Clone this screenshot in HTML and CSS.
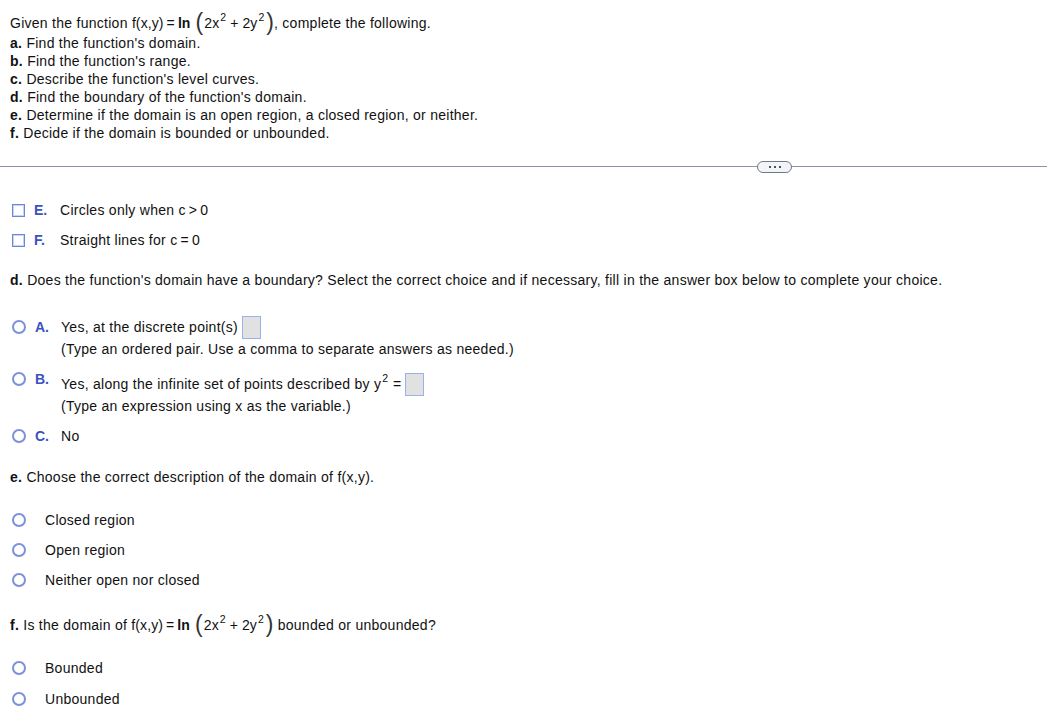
FILE: index.html
```html
<!DOCTYPE html>
<html>
<head>
<meta charset="utf-8">
<link rel="stylesheet" href="styles.css">
</head>
<body>
<div class="intro">
  <p class="first">Given the function <span class="math">f(x,y)<span class="eq">=</span><b>ln</b><span class="paren">(</span>2x<sup>2</sup><span class="op">+</span>2y<sup>2</sup><span class="paren">)</span></span>, complete the following.</p>
  <p><b>a.</b> Find the function's domain.</p>
  <p><b>b.</b> Find the function's range.</p>
  <p><b>c.</b> Describe the function's level curves.</p>
  <p><b>d.</b> Find the boundary of the function's domain.</p>
  <p><b>e.</b> Determine if the domain is an open region, a closed region, or neither.</p>
  <p><b>f.</b> Decide if the domain is bounded or unbounded.</p>
</div>

<div class="sep">
  <span class="line left"></span>
  <span class="more"><i></i><i></i><i></i></span>
  <span class="line right"></span>
</div>

<div class="content">
  <div class="choices">
    <div class="row"><span class="cb"></span><span class="letter">E.</span><span class="txt">Circles only when c<span class="rel">&gt;</span>0</span></div>
    <div class="row"><span class="cb"></span><span class="letter">F.</span><span class="txt">Straight lines for c<span class="rel">=</span>0</span></div>
  </div>

  <p class="question q-d"><b>d.</b> Does the function's domain have a boundary? Select the correct choice and if necessary, fill in the answer box below to complete your choice.</p>

  <div class="mc">
    <div class="mc-item">
      <span class="radio"></span><span class="letter">A.</span>
      <div class="body">
        <div class="main"><span>Yes, at the discrete point(s)</span><span class="box"></span></div>
        <div class="hint">(Type an ordered pair. Use a comma to separate answers as needed.)</div>
      </div>
    </div>
    <div class="mc-item b-item">
      <span class="radio"></span><span class="letter">B.</span>
      <div class="body">
        <div class="main"><span>Yes, along the infinite set of points described by y<sup>2</sup></span><span class="eq2">=</span><span class="box"></span></div>
        <div class="hint">(Type an expression using x as the variable.)</div>
      </div>
    </div>
    <div class="mc-item">
      <span class="radio"></span><span class="letter">C.</span>
      <div class="body"><div class="main"><span>No</span></div></div>
    </div>
  </div>

  <p class="question q-e"><b>e.</b> Choose the correct description of the domain of f(x,y).</p>

  <div class="opts">
    <div class="opt"><span class="radio"></span><span class="opt-txt">Closed region</span></div>
    <div class="opt"><span class="radio"></span><span class="opt-txt">Open region</span></div>
    <div class="opt"><span class="radio"></span><span class="opt-txt">Neither open nor closed</span></div>
  </div>

  <p class="question q-f"><b>f.</b> Is the domain of <span class="math">f(x,y)<span class="eq">=</span><b>ln</b><span class="paren">(</span>2x<sup>2</sup><span class="op">+</span>2y<sup>2</sup><span class="paren">)</span></span> bounded or unbounded?</p>

  <div class="opts opts-f">
    <div class="opt"><span class="radio"></span><span class="opt-txt">Bounded</span></div>
    <div class="opt"><span class="radio"></span><span class="opt-txt">Unbounded</span></div>
  </div>
</div>
</body>
</html>
```

FILE: styles.css
```css
html, body {
  margin: 0;
  padding: 0;
  background: #ffffff;
}
body {
  font-family: "Liberation Sans", Arial, sans-serif;
  font-size: 14px;
  letter-spacing: 0.27px;
  color: #111111;
  width: 1047px;
}
p { margin: 0; }
b { font-weight: bold; }

.intro {
  padding: 12px 0 0 10px;
}
.intro p {
  line-height: 18px;
  height: 18px;
  white-space: nowrap;
}
.intro p.first {
  line-height: 22px;
  height: 22px;
}

.math { white-space: nowrap; letter-spacing: 0.1px; }
sup {
  font-size: 10.5px;
  line-height: 0;
  vertical-align: 7px;
  margin-left: 1px;
  letter-spacing: 0;
}
.eq { margin: 0 3px 0 3px; }
.op { margin: 0 4px 0 4px; }
.paren {
  font-size: 23px;
  font-weight: normal;
  line-height: 0;
  vertical-align: -2px;
  margin: 0 1px 0 5px;
  color: #333;
}
.math .paren:last-child { margin: 0 0 0 2px; }

.sep {
  display: flex;
  align-items: center;
  height: 13px;
  margin-top: 18px;
}
.sep .line {
  height: 1px;
  background: #8c94a4;
}
.sep .left { width: 757px; }
.sep .right { flex: 1; }
.more {
  width: 33px;
  height: 10px;
  border: 1px solid #6f7888;
  border-radius: 6px;
  background: #f3f4f7;
  display: flex;
  justify-content: center;
  align-items: center;
  gap: 3px;
}
.more i {
  width: 2px;
  height: 2px;
  background: #4a5262;
  display: block;
}

.content {
  padding-left: 12px;
}

.choices {
  margin-top: 22px;
}
.row {
  display: flex;
  align-items: center;
  height: 30px;
}
.cb {
  width: 11px;
  height: 11px;
  border: 1px solid #6e86d9;
  box-shadow: inset 0 0 0 1px #c8d2f2;
  margin-right: 9px;
  flex: none;
}
.letter {
  font-weight: bold;
  color: #3a52c0;
  width: 26px;
  flex: none;
  letter-spacing: 0;
}
.txt { white-space: nowrap; }
.rel { margin: 0 3px; }

.question {
  white-space: nowrap;
  margin-left: -2px;
  line-height: 18px;
}
.q-d { margin-top: 16px; }
.q-e { margin-top: 21px; }
.q-f { margin-top: 19px; line-height: 22px; }

.mc { margin-top: 29px; }
.mc-item {
  display: flex;
  align-items: flex-start;
  margin-bottom: 8px;
}
.mc-item .radio { margin-top: 2px; margin-right: 9px; }
.mc-item .letter { line-height: 18px; }
.body { line-height: 22px; }
.main {
  display: flex;
  align-items: center;
  height: 22px;
  white-space: nowrap;
  margin-top: -2px;
}
.b-item { margin-top: 10px; margin-bottom: 10px; }
.b-item .body .main { margin-top: 3px; }
.hint { height: 22px; white-space: nowrap; }
.box {
  display: inline-block;
  width: 17px;
  height: 21px;
  background: #e1e1e1;
  border: 1px solid #9cb0ea;
  margin-left: 4px;
  flex: none;
}
.eq2 { margin-left: 5px; }
.b-item .box { margin-left: 4px; }

.radio {
  width: 10px;
  height: 10px;
  border: 2px solid #7d90dc;
  border-radius: 50%;
  flex: none;
  display: inline-block;
  box-sizing: content-box;
  background: #fff;
}

.opts { margin-top: 19px; }
.opt {
  display: flex;
  align-items: center;
  height: 30px;
}
.opt .radio { margin-right: 19px; }
.opt-txt { white-space: nowrap; }
.opts-f { margin-top: 17px; }
.opts-f .opt:last-child { height: 31px; }
```
